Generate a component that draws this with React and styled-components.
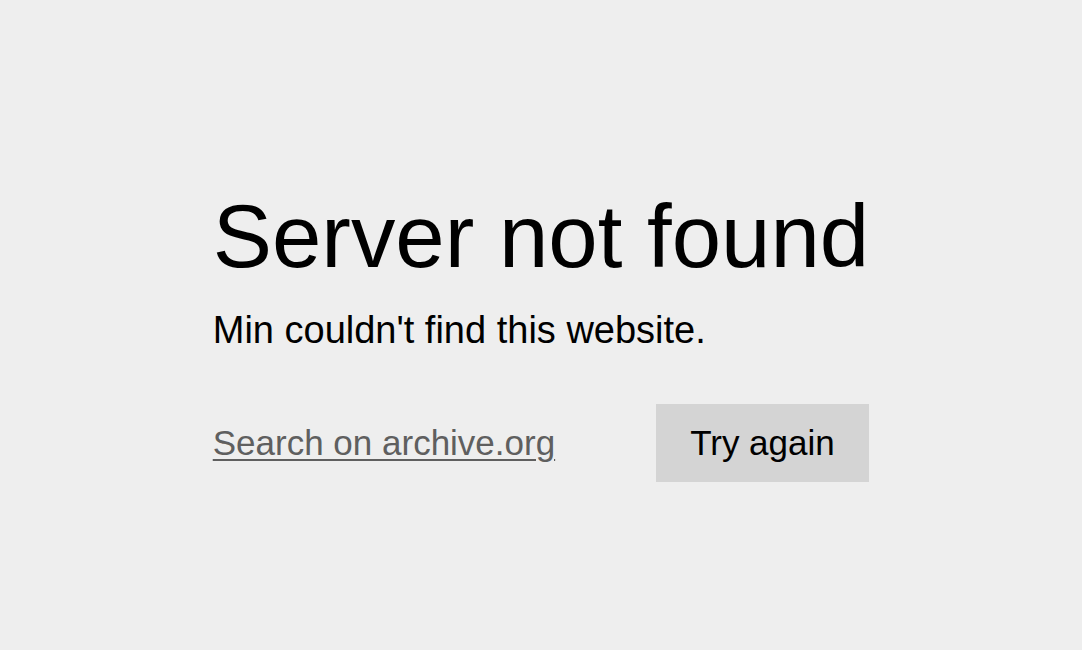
import React from 'react'
import styled, { createGlobalStyle } from 'styled-components'

const GlobalStyle = createGlobalStyle`
  html, body {
    margin: 0;
    padding: 0;
    height: 100%;
    background: #eeeeee;
  }
  #root {
    height: 100%;
  }
`

export default function App() {
  return (
    <>
      <GlobalStyle />
      <Page>
        <Content>
          <Title>Server not found</Title>
          <Message>Min couldn't find this website.</Message>
          <Actions>
            <ArchiveLink href="#">Search on archive.org</ArchiveLink>
            <RetryButton>Try again</RetryButton>
          </Actions>
        </Content>
      </Page>
    </>
  )
}

const Page = styled.div`
  height: 100%;
  display: flex;
  align-items: center;
  justify-content: center;
  font-family: 'Liberation Sans', Arial, sans-serif;
  color: #000;
`

const Content = styled.div`
  display: flex;
  flex-direction: column;
  width: fit-content;
  margin-top: 18px;
`

const Title = styled.h1`
  margin: 0;
  font-size: 88.8px;
  font-weight: 400;
  line-height: 1.15;
  white-space: nowrap;
`

const Message = styled.p`
  margin: 20px 0 0;
  font-size: 38px;
  line-height: 1.2;
`

const Actions = styled.div`
  display: flex;
  align-items: center;
  justify-content: space-between;
  margin-top: 50px;
`

const ArchiveLink = styled.a`
  font-size: 35px;
  color: #5f5f5f;
  text-decoration: underline;
  text-underline-offset: 4px;
  text-decoration-thickness: 2px;
`

const RetryButton = styled.button`
  font-family: inherit;
  font-size: 35px;
  color: #000;
  background: #d4d4d4;
  border: none;
  padding: 0 34.5px;
  height: 78px;
  cursor: pointer;
`
